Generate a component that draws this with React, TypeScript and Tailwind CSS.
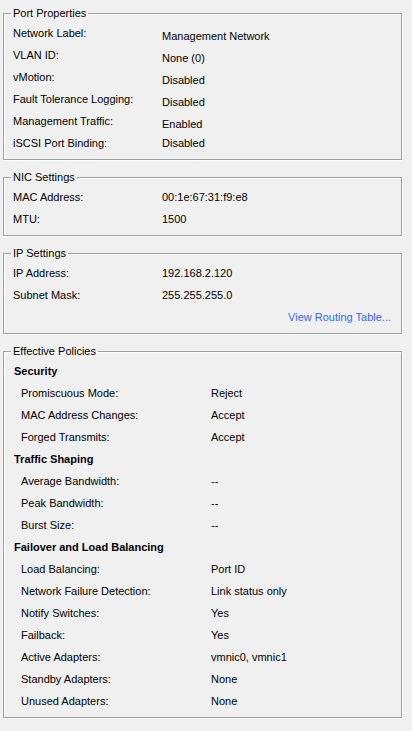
import type { ReactNode } from "react";

type Row = { label: string; value: string; drop?: boolean };

const portRows: Row[] = [
  { label: "Network Label:", value: "Management Network", drop: true },
  { label: "VLAN ID:", value: "None (0)", drop: true },
  { label: "vMotion:", value: "Disabled", drop: true },
  { label: "Fault Tolerance Logging:", value: "Disabled", drop: true },
  { label: "Management Traffic:", value: "Enabled", drop: true },
  { label: "iSCSI Port Binding:", value: "Disabled" },
];

const nicRows: Row[] = [
  { label: "MAC Address:", value: "00:1e:67:31:f9:e8" },
  { label: "MTU:", value: "1500" },
];

const ipRows: Row[] = [
  { label: "IP Address:", value: "192.168.2.120" },
  { label: "Subnet Mask:", value: "255.255.255.0" },
];

const policies: Array<{ title: string; rows: Row[] }> = [
  {
    title: "Security",
    rows: [
      { label: "Promiscuous Mode:", value: "Reject" },
      { label: "MAC Address Changes:", value: "Accept" },
      { label: "Forged Transmits:", value: "Accept" },
    ],
  },
  {
    title: "Traffic Shaping",
    rows: [
      { label: "Average Bandwidth:", value: "--" },
      { label: "Peak Bandwidth:", value: "--" },
      { label: "Burst Size:", value: "--" },
    ],
  },
  {
    title: "Failover and Load Balancing",
    rows: [
      { label: "Load Balancing:", value: "Port ID" },
      { label: "Network Failure Detection:", value: "Link status only" },
      { label: "Notify Switches:", value: "Yes" },
      { label: "Failback:", value: "Yes" },
      { label: "Active Adapters:", value: "vmnic0, vmnic1" },
      { label: "Standby Adapters:", value: "None" },
      { label: "Unused Adapters:", value: "None" },
    ],
  },
];

function GroupBox({ title, children, className = "" }: { title: string; children: ReactNode; className?: string }) {
  return (
    <fieldset
      className={`ml-[3px] w-[399px] border border-[#a0a0a0] px-[9px] pb-[5px] pt-[2px] shadow-[inset_1px_1px_0_#ffffff,1px_1px_0_#ffffff] ${className}`}
    >
      <legend className="ml-[-2px] px-[2px] text-[11px] leading-[14px]">{title}</legend>
      {children}
    </fieldset>
  );
}

function InfoRow({ row }: { row: Row }) {
  return (
    <div className="flex h-[22px] items-center">
      <span className="w-[149px] shrink-0">{row.label}</span>
      <span className={row.drop ? "pt-[6px]" : ""}>{row.value}</span>
    </div>
  );
}

export default function App() {
  return (
    <div
      className="min-h-[731px] w-[412px] bg-[#f0f0f0] pt-[6px] text-[11px] text-black"
      style={{ fontFamily: '"Liberation Sans", Arial, sans-serif' }}
    >
      <GroupBox title="Port Properties">
        {portRows.map((row) => (
          <InfoRow key={row.label} row={row} />
        ))}
      </GroupBox>

      <GroupBox title="NIC Settings" className="mt-[10px]">
        {nicRows.map((row) => (
          <InfoRow key={row.label} row={row} />
        ))}
      </GroupBox>

      <GroupBox title="IP Settings" className="mt-[10px]">
        {ipRows.map((row) => (
          <InfoRow key={row.label} row={row} />
        ))}
        <div className="flex h-[22px] items-center justify-end pr-[1px]">
          <a href="#" className="text-[#3366ff]">View Routing Table...</a>
        </div>
      </GroupBox>

      <GroupBox title="Effective Policies" className="mt-[10px]">
        {policies.map((group) => (
          <div key={group.title}>
            <div className="flex h-[22px] items-center pl-[1px] font-bold">{group.title}</div>
            {group.rows.map((row) => (
              <div key={row.label} className="flex h-[22px] items-center pl-[8px]">
                <span className="w-[190px] shrink-0">{row.label}</span>
                <span>{row.value}</span>
              </div>
            ))}
          </div>
        ))}
      </GroupBox>
    </div>
  );
}
